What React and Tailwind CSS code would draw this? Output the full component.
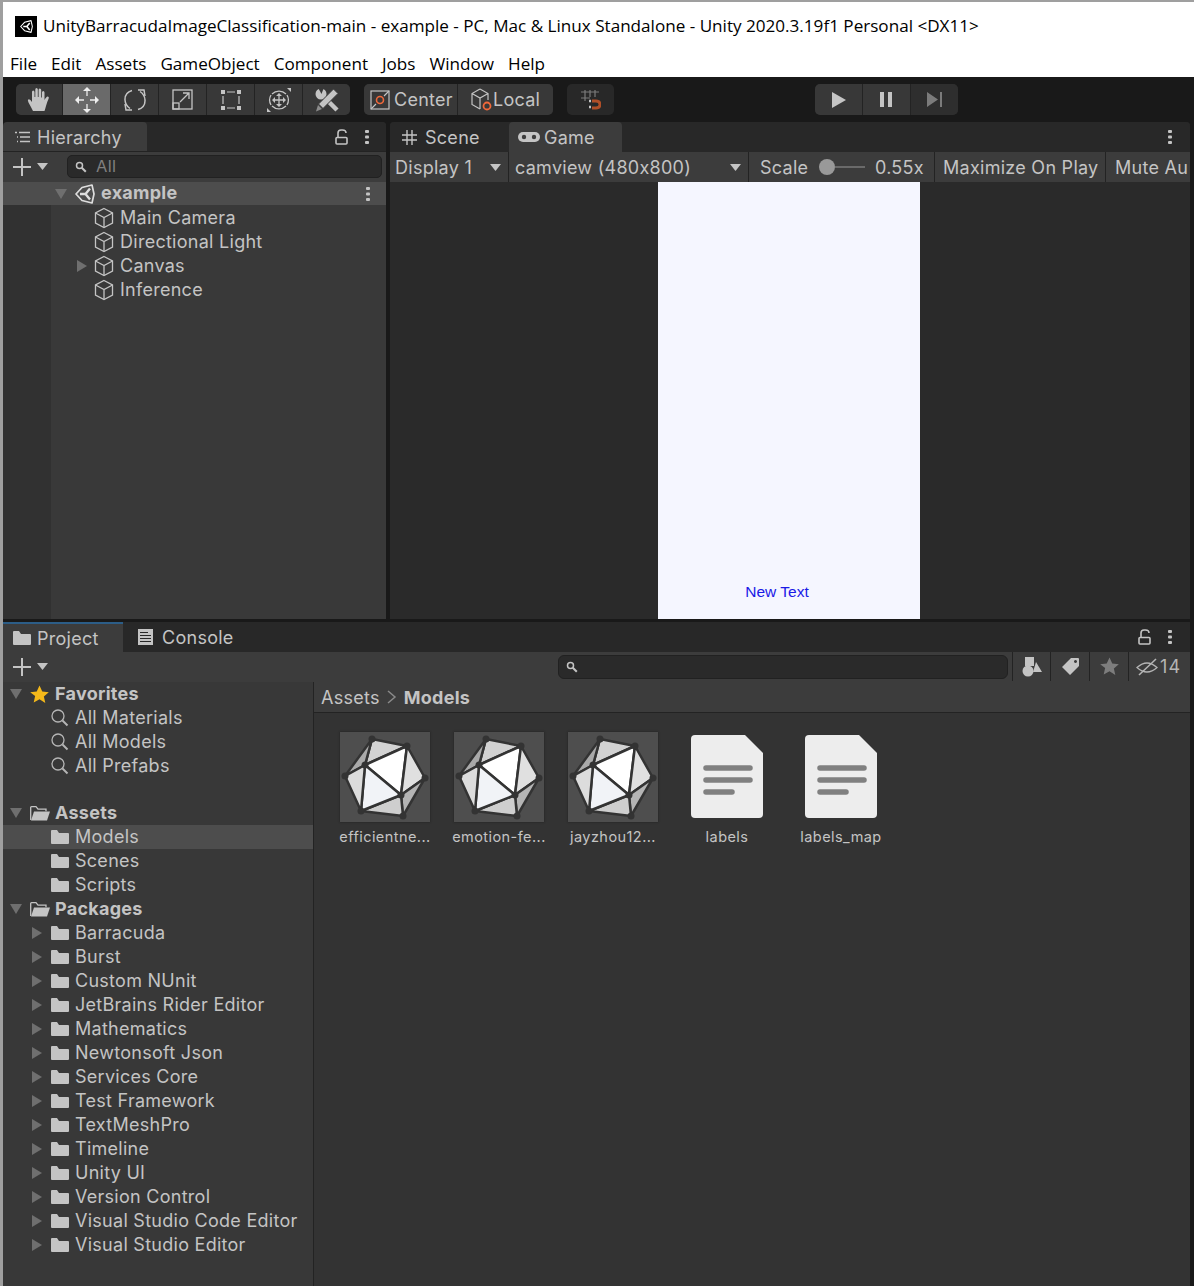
const hierarchyItems = [
  { name: "Main Camera" },
  { name: "Directional Light" },
  { name: "Canvas", expandable: true },
  { name: "Inference" },
];

const packages = [
  "Barracuda",
  "Burst",
  "Custom NUnit",
  "JetBrains Rider Editor",
  "Mathematics",
  "Newtonsoft Json",
  "Services Core",
  "Test Framework",
  "TextMeshPro",
  "Timeline",
  "Unity UI",
  "Version Control",
  "Visual Studio Code Editor",
  "Visual Studio Editor",
];

const ArrowDown = () => (
  <svg width="12" height="12" viewBox="0 0 12 12" className="shrink-0"><path d="M0 1h12L6 11z" fill="#6f6f6f" /></svg>
);

const ArrowRight = () => (
  <svg width="12" height="12" viewBox="0 0 12 12" className="shrink-0"><path d="M1 0v12l10-6z" fill="#6f6f6f" /></svg>
);

const Caret = ({ color = "#c4c4c4" }) => (
  <svg width="11" height="7" viewBox="0 0 11 7" className="shrink-0"><path d="M0 0h11L5.5 7z" fill={color} /></svg>
);

const Plus = () => (
  <svg width="18" height="18" viewBox="0 0 18 18" className="shrink-0"><path d="M9 0v18M0 9h18" stroke="#c4c4c4" strokeWidth="2" /></svg>
);

const Dots = () => (
  <svg width="4" height="16" viewBox="0 0 4 16" className="shrink-0"><g fill="#c4c4c4"><rect y="1" width="4" height="3" rx="1" /><rect y="6.5" width="4" height="3" rx="1" /><rect y="12" width="4" height="3" rx="1" /></g></svg>
);

const Lock = () => (
  <svg width="13" height="16" viewBox="0 0 13 16" className="shrink-0" fill="none" stroke="#c4c4c4" strokeWidth="1.6">
    <rect x="1" y="8.500" width="11" height="6.500" rx="1" />
    <path d="M3 8.500V4Q3 1 6 1h1.500Q11 1 11 4" />
  </svg>
);

const Cube = () => (
  <svg width="20" height="22" viewBox="0 0 20 22" className="shrink-0" fill="none" stroke="#c4c4c4" strokeWidth="1.3">
    <path d="M10 1.500l8.500 4.500v10L10 20.500 1.500 16V6z" />
    <path d="M1.500 6l8.500 4.500L18.500 6M10 10.500v10" />
  </svg>
);

const UnityLogo = ({ size = 20, color = "#dddddd" }) => (
  <svg width={size} height={size} viewBox="0 0 20 20" className="shrink-0" fill="none" stroke={color}>
    <path d="M1 10L7 3.500 17 1l2 9-2 9-10-2.500z" strokeWidth="1.700" strokeLinejoin="round" />
    <path d="M5 10h5.500M10.500 10L15 4.500M10.500 10L15 15.500" strokeWidth="2.400" />
  </svg>
);

const Folder = () => (
  <svg width="18" height="14" viewBox="0 0 18 14" className="shrink-0"><path d="M0 1q0-1 1-1h5l2 3h9q1 0 1 1v9q0 1-1 1H1q-1 0-1-1z" fill="#c4c4c4" /></svg>
);

const FolderOpen = () => (
  <svg width="20" height="15" viewBox="0 0 20 15" className="shrink-0">
    <path d="M.700 14V1.500q0-.800.800-.800h4.500l2 2.500h8v2" fill="none" stroke="#c4c4c4" strokeWidth="1.300" />
    <path d="M1 14.500l3-9h16l-3 9z" fill="#c4c4c4" />
  </svg>
);

const Star = ({ color = "#f5b91a", size = 19 }) => (
  <svg width={size} height={size} viewBox="0 0 20 20" className="shrink-0"><path d="M10 .500l2.900 6.300 6.900.700-5.200 4.600 1.500 6.900L10 15l-6.100 3.500 1.500-6.900L.200 7.500l6.900-.700z" fill={color} /></svg>
);

const SearchIcon = () => (
  <svg width="20" height="20" viewBox="0 0 20 20" className="shrink-0" fill="none">
    <circle cx="8" cy="8" r="6" stroke="#b5b5b5" strokeWidth="1.300" />
    <path d="M12.500 12.500l5 5" stroke="#b5b5b5" strokeWidth="2" />
  </svg>
);

const SmallSearch = () => (
  <svg width="12" height="12" viewBox="0 0 12 12" className="shrink-0" fill="none">
    <circle cx="4.500" cy="4.500" r="3" stroke="#c4c4c4" strokeWidth="1.500" />
    <path d="M6.800 6.800l4 4" stroke="#c4c4c4" strokeWidth="2" />
  </svg>
);

const HandIcon = () => (
  <svg width="24" height="25" viewBox="0 0 24 25" fill="#c4c4c4">
    <path d="M6 24Q4 20 1.500 15.500 .200 13 1.500 12.300 3 11.700 5 15V5q0-1.500 1.200-1.500T7.500 5v5h.8V2.500Q8.300 1 9.500 1t1.300 1.500V10h.8V3q0-1.500 1.200-1.500T14.200 3v7.500h.8V5.500q0-1.500 1.200-1.500t1.300 1.500V13q2-4 3.500-3.500t.5 2.500q-1.500 3-2.500 7-.8 3-1.500 5z" />
  </svg>
);

const MoveIcon = () => (
  <svg width="24" height="28" viewBox="0 0 24 28" fill="none" stroke="#eeeeee" strokeWidth="1.300">
    <path d="M12 3v7M12 18v7M2 14h7M15 14h7" />
    <path d="M12 1l-4 4h8zM12 27l-4-4h8zM0 14l4-4v8zM24 14l-4-4v8z" fill="#eeeeee" stroke="none" />
  </svg>
);

const RotateIcon = () => (
  <svg width="22" height="24" viewBox="0 0 22 24" fill="none" stroke="#c4c4c4" strokeWidth="1.500">
    <path d="M8 2.500C3 4 .800 8 1 12c.200 3.500 2 6.500 5 8.500" />
    <path d="M14 21.500c5-1.500 7.200-5.500 7-9.500-.200-3.500-2-6.500-5-8.500" />
    <path d="M1 16l1 6h6M21 8l-1-6h-6" />
  </svg>
);

const ScaleIcon = () => (
  <svg width="21" height="21" viewBox="0 0 21 21" fill="none" stroke="#c4c4c4" strokeWidth="1.300">
    <rect x="1" y="1" width="19" height="19" />
    <rect x="1" y="14" width="6" height="6" />
    <path d="M8 13l9-9M11 4h6v6" />
  </svg>
);

const RectIcon = () => (
  <svg width="20" height="20" viewBox="0 0 20 20" fill="none" stroke="#c4c4c4" strokeWidth="1.200">
    <path d="M6 2h8M6 18h8M2 6v8M18 6v8" />
    <g fill="#c4c4c4" stroke="none"><rect width="4" height="4" /><rect x="16" width="4" height="4" /><rect y="16" width="4" height="4" /><rect x="16" y="16" width="4" height="4" /></g>
  </svg>
);

const TransformIcon = () => (
  <svg width="24" height="24" viewBox="0 0 24 24" fill="none" stroke="#c4c4c4" strokeWidth="1.300">
    <path d="M5 6a10 10 0 0 1 14 0M19 18a10 10 0 0 1-14 0M4 17a10 10 0 0 1 0-10M20 7a10 10 0 0 1 0 10" />
    <path d="M12 6v12M6 12h12" />
    <g fill="#c4c4c4" stroke="none">
      <path d="M12 5l-3 3h6zM12 19l-3-3h6zM5 12l3-3v6zM19 12l-3-3v6z" />
      <path d="M24 0v4l-4-4zM0 24v-4l4 4z" />
    </g>
  </svg>
);

const ToolsIcon = () => (
  <svg width="24" height="24" viewBox="0 0 24 24">
    <path d="M7 7l15 15" stroke="#c4c4c4" strokeWidth="4.500" />
    <circle cx="6" cy="6" r="5.500" fill="#c4c4c4" />
    <path d="M6.500 6L3 -.500h6z" fill="#383838" />
    <path d="M18.500 1l4.500 4.500L8 20.500 3.500 16z" fill="#c4c4c4" stroke="#383838" strokeWidth="1" />
    <path d="M3 17l4 4-6 2.500z" fill="#8c8c8c" />
  </svg>
);

const PivotIcon = () => (
  <svg width="20" height="20" viewBox="0 0 20 20" fill="none" className="shrink-0">
    <rect x="1" y="1" width="18" height="18" stroke="#c4c4c4" strokeWidth="1.200" />
    <path d="M1 19l5-5M14 6l5-5" stroke="#c4c4c4" strokeWidth="1.200" />
    <circle cx="10" cy="10" r="3.500" stroke="#f0683a" strokeWidth="1.600" />
  </svg>
);

const LocalIcon = () => (
  <svg width="22" height="24" viewBox="0 0 22 24" fill="none" className="shrink-0">
    <path d="M10 1l8 4.500V12M10 21l-8-4.500v-11L10 1M2 5.500l8 4.500 8-4.500M10 10v11" stroke="#c4c4c4" strokeWidth="1.200" />
    <circle cx="17" cy="18" r="3.500" stroke="#f0683a" strokeWidth="1.800" />
  </svg>
);

const SnapIcon = () => (
  <svg width="20" height="22" viewBox="0 0 20 22" fill="none">
    <path d="M4 1v11M9 1v7M14 1v7M0 3h18M0 9h9" stroke="#7b7b7b" strokeWidth="1.200" />
    <path d="M8 12h2M8 18h2" stroke="#c4c4c4" strokeWidth="2.500" />
    <path d="M11 12h4q4 0 4 3.500t-4 3.500h-4" stroke="#b04f28" strokeWidth="2.800" />
  </svg>
);

const GamepadIcon = () => (
  <svg width="22" height="12" viewBox="0 0 22 12" className="shrink-0">
    <rect y="1" width="22" height="10" rx="5" fill="#c4c4c4" />
    <circle cx="6" cy="6" r="2.200" fill="#3c3c3c" />
    <circle cx="16" cy="6" r="2.200" fill="#3c3c3c" />
  </svg>
);

const HashIcon = () => (
  <svg width="15" height="15" viewBox="0 0 15 15" className="shrink-0" stroke="#c4c4c4" strokeWidth="1.400">
    <path d="M5 0v15M10 0v15M0 5h15M0 10h15" />
  </svg>
);

const ListIcon = () => (
  <svg width="15" height="12" viewBox="0 0 15 12" className="shrink-0" stroke="#c4c4c4" strokeWidth="1.500">
    <path d="M4 1.500h11M5 6h10M5 10.500h10M0 1.500h2M2 6h1M2 10.500h1" />
  </svg>
);

const ConsoleIcon = () => (
  <svg width="15" height="16" viewBox="0 0 15 16" className="shrink-0">
    <rect width="15" height="16" fill="#c4c4c4" />
    <path d="M2 3.500h8M2 6.500h11M2 9.500h11M2 12.500h11" stroke="#282828" strokeWidth="1.200" />
  </svg>
);

const Icosahedron = () => (
  <svg width="90" height="90" viewBox="0 0 90 90" className="block bg-[#4e4e4e] shadow-[0_0_2px_#1f1f1f]">
    <g stroke="#333333" strokeWidth="2.500" strokeLinejoin="round">
      <path d="M32 7L67 14 25 33z" fill="#d2d2d2" />
      <path d="M32 7L25 33 5 44z" fill="#a9a9a9" />
      <path d="M25 33L67 14 61 63z" fill="#ffffff" />
      <path d="M67 14L85 46 61 63z" fill="#e0e0e0" />
      <path d="M85 46L61 63 63 84z" fill="#b4b4b4" />
      <path d="M61 63L21 79 63 84z" fill="#cecece" />
      <path d="M25 33L61 63 21 79z" fill="#f1f3f7" />
      <path d="M5 44L25 33 21 79z" fill="#dcdcdc" />
    </g>
    <g fill="#333333">
      <circle cx="32" cy="7" r="3.500" />
      <circle cx="67" cy="14" r="3.500" />
      <circle cx="5" cy="44" r="3.500" />
      <circle cx="25" cy="33" r="3.500" />
      <circle cx="85" cy="46" r="3.500" />
      <circle cx="61" cy="63" r="3.500" />
      <circle cx="21" cy="79" r="3.500" />
      <circle cx="63" cy="84" r="3.500" />
    </g>
  </svg>
);

const DocIcon = () => (
  <svg width="72" height="83" viewBox="0 0 72 83" className="block">
    <path d="M4 0h50l18 18v61q0 4-4 4H4q-4 0-4-4V4q0-4 4-4z" fill="#ededed" />
    <g stroke="#808080" strokeWidth="5.500" strokeLinecap="round">
      <path d="M15 33h44M15 45h44M15 57h26" />
    </g>
  </svg>
);

const ToolButton = ({ active, children }) => (
  <div className={`w-[47px] first:w-[46px] h-full flex items-center justify-center ${active ? "bg-[#6a6a6a]" : "bg-[#383838]"}`}>
    {children}
  </div>
);

const ModelAsset = ({ label }) => (
  <div className="w-[114px] flex flex-col items-center">
    <div className="w-[90px] h-[90px]"><Icosahedron /></div>
    <div className="mt-[6px] text-[14.500px] leading-[18px] tracking-[0.03em] whitespace-nowrap">{label}</div>
  </div>
);

const DocAsset = ({ label }) => (
  <div className="w-[114px] flex flex-col items-center">
    <div className="h-[90px] pt-[3px]"><DocIcon /></div>
    <div className="mt-[6px] text-[14.500px] leading-[18px] tracking-[0.03em] whitespace-nowrap">{label}</div>
  </div>
);

const FavoriteRow = ({ label }) => (
  <div className="h-6 flex items-center pl-[47px]">
    <div className="w-[25px]"><SearchIcon /></div>
    <span className="pb-[2px]">{label}</span>
  </div>
);

const FolderRow = ({ label, arrow, selected }) => (
  <div className={`h-6 flex items-center ${selected ? "bg-[#4d4d4d]" : ""}`}>
    <div className="w-[48px] pl-[28px] flex">{arrow && <ArrowRight />}</div>
    <div className="w-[24px]"><Folder /></div>
    <span className="pb-[2px]">{label}</span>
  </div>
);

export default function App() {
  return (
    <div
      className="w-[1194px] h-[1286px] bg-[#191919] border-l-[3px] border-t-2 border-[#9f9f9f] flex flex-col overflow-hidden text-[#c4c4c4] text-[18px] tracking-[0.015em]"
      style={{ fontFamily: "Inter, sans-serif" }}
    >
      {/* window title + menu */}
      <div className="bg-white text-black tracking-normal shrink-0" style={{ fontFamily: "'Open Sans', sans-serif" }}>
        <div className="h-[48px] flex items-center pl-[12px]">
          <div className="w-[22px] h-[21px] bg-black flex items-center justify-center">
            <UnityLogo size={13} color="#ffffff" />
          </div>
          <span className="ml-[6px] text-[17.100px] whitespace-nowrap">UnityBarracudaImageClassification-main - example - PC, Mac &amp; Linux Standalone - Unity 2020.3.19f1 Personal &lt;DX11&gt;</span>
        </div>
        <div className="h-[27px] flex items-center gap-[14px] pl-[7px] text-[17.100px]">
          <span>File</span>
          <span>Edit</span>
          <span>Assets</span>
          <span>GameObject</span>
          <span>Component</span>
          <span>Jobs</span>
          <span>Window</span>
          <span>Help</span>
        </div>
      </div>

      {/* main toolbar */}
      <div className="h-[45px] shrink-0 flex items-center pl-[13px]">
        <div className="h-[31px] flex gap-px rounded-[5px] overflow-hidden bg-[#232323]">
          <ToolButton><HandIcon /></ToolButton>
          <ToolButton active><MoveIcon /></ToolButton>
          <ToolButton><RotateIcon /></ToolButton>
          <ToolButton><ScaleIcon /></ToolButton>
          <ToolButton><RectIcon /></ToolButton>
          <ToolButton><TransformIcon /></ToolButton>
          <ToolButton><ToolsIcon /></ToolButton>
        </div>
        <div className="ml-[14px] h-[31px] flex gap-px rounded-[5px] overflow-hidden bg-[#232323]">
          <div className="w-[93px] bg-[#383838] flex items-center pl-[6px] gap-[4px]"><PivotIcon /><span>Center</span></div>
          <div className="w-[95px] bg-[#383838] flex items-center pl-[12px] gap-[1px]"><LocalIcon /><span>Local</span></div>
        </div>
        <div className="ml-[14px] w-[47px] h-[31px] rounded-[5px] bg-[#282828] flex items-center justify-center"><SnapIcon /></div>
        <div className="ml-[201px] h-[31px] flex gap-px rounded-[5px] overflow-hidden bg-[#232323]">
          <div className="w-[47px] bg-[#383838] flex items-center justify-center">
            <svg width="14" height="16" viewBox="0 0 14 16"><path d="M0 0l14 8-14 8z" fill="#c4c4c4" /></svg>
          </div>
          <div className="w-[47px] bg-[#383838] flex items-center justify-center">
            <svg width="13" height="15" viewBox="0 0 13 15"><path d="M0 0h4v15H0zM8 0h4v15H8z" fill="#c4c4c4" /></svg>
          </div>
          <div className="w-[47px] bg-[#2e2e2e] flex items-center justify-center">
            <svg width="16" height="15" viewBox="0 0 16 15"><path d="M0 0l11 7.500L0 15zM13 0h2v15h-2z" fill="#7b7b7b" /></svg>
          </div>
        </div>
      </div>

      {/* hierarchy + game */}
      <div className="h-[497px] shrink-0 flex gap-[4px] pr-[4px]">
        <div className="w-[383px] flex flex-col rounded-t-[4px] overflow-hidden bg-[#313131]">
          <div className="h-[29px] shrink-0 bg-[#282828] flex">
            <div className="w-[144px] bg-[#3c3c3c] rounded-t-[4px] flex items-center pl-[12px] pt-px gap-[7px]">
              <ListIcon />
              <span>Hierarchy</span>
            </div>
            <div className="flex-1 flex items-center justify-end pr-[17px] gap-[17px]"><Lock /><Dots /></div>
          </div>
          <div className="h-[31px] shrink-0 bg-[#3c3c3c] border-t border-[#232323] flex items-center pl-[10px] pb-px">
            <Plus />
            <div className="ml-[6px]"><Caret /></div>
            <div className="ml-[19px] w-[315px] h-[23px] bg-[#2a2a2a] border border-[#212121] rounded-[5px] flex items-center pl-[7px] gap-[9px] text-[#7f7f7f] text-[16.500px]">
              <SmallSearch />
              <span>All</span>
            </div>
          </div>
          <div className="flex-1 flex flex-col">
            <div className="h-[23px] shrink-0 bg-[#4d4d4d] flex items-center pl-[52px]">
              <ArrowDown />
              <div className="ml-[8px]"><UnityLogo /></div>
              <span className="ml-[6px] pb-[2px] font-bold">example</span>
              <div className="ml-auto mr-[16px]"><Dots /></div>
            </div>
            <div className="flex-1 ml-[48px] bg-[#393939] pt-px">
              {hierarchyItems.map((item) => (
                <div key={item.name} className="h-6 flex items-center pl-[25px]">
                  <div className="w-[18px] flex">{item.expandable && <ArrowRight />}</div>
                  <Cube />
                  <span className="ml-[6px] pb-[2px]">{item.name}</span>
                </div>
              ))}
            </div>
          </div>
        </div>

        <div className="flex-1 flex flex-col rounded-t-[4px] overflow-hidden bg-[#2a2a2a]">
          <div className="h-[30px] shrink-0 bg-[#282828] flex">
            <div className="w-[119px] flex items-center pl-[12px] gap-[8px]"><HashIcon /><span>Scene</span></div>
            <div className="w-[113px] bg-[#3c3c3c] rounded-t-[4px] flex items-center pl-[9px] gap-[4px]"><GamepadIcon /><span>Game</span></div>
            <div className="flex-1 flex items-center justify-end pr-[18px]"><Dots /></div>
          </div>
          <div className="h-[30px] shrink-0 bg-[#3c3c3c] flex whitespace-nowrap overflow-hidden">
            <div className="w-[119px] border-r border-[#232323] flex items-center pl-[5px]">
              <span>Display 1</span>
              <div className="ml-auto mr-[7px]"><Caret /></div>
            </div>
            <div className="w-[240px] border-r border-[#232323] flex items-center pl-[6px]">
              <span>camview (480x800)</span>
              <div className="ml-auto mr-[7px]"><Caret /></div>
            </div>
            <div className="w-[186px] border-r border-[#232323] flex items-center pl-[11px]">
              <span className="w-[59px]">Scale</span>
              <div className="w-[16px] h-[16px] rounded-full bg-[#999999] shrink-0" />
              <div className="w-[30px] h-[2px] bg-[#6a6a6a] shrink-0" />
              <span className="ml-[10px]">0.55x</span>
            </div>
            <div className="w-[171px] border-r border-[#232323] flex items-center pl-[8px]">Maximize On Play</div>
            <div className="flex-1 flex items-center pl-[9px] overflow-hidden">Mute Au</div>
          </div>
          <div className="flex-1 flex justify-center pr-[2px]">
            <div className="w-[262px] bg-[#f5f6ff] flex items-end justify-center pb-[18px] pr-[24px]">
              <span className="text-[15.500px] leading-[18px] tracking-normal text-[#1a1ae6]" style={{ fontFamily: "'Liberation Sans', sans-serif" }}>New Text</span>
            </div>
          </div>
        </div>
      </div>

      {/* project */}
      <div className="mt-[3px] flex-1 mr-[4px] flex flex-col bg-[#333333] min-h-0">
        <div className="h-[30px] shrink-0 bg-[#282828] flex">
          <div className="w-[120px] bg-[#3c3c3c] border-t-2 border-[#2c5d87] flex items-center pl-[10px] gap-[6px]"><Folder /><span>Project</span></div>
          <div className="ml-[15px] flex items-center gap-[9px]"><ConsoleIcon /><span>Console</span></div>
          <div className="flex-1 flex items-center justify-end pr-[18px] gap-[17px]"><Lock /><Dots /></div>
        </div>
        <div className="h-[30px] shrink-0 bg-[#3c3c3c] flex items-center pl-[10px] pb-px">
          <Plus />
          <div className="ml-[6px]"><Caret /></div>
          <div className="ml-[510px] w-[450px] h-[24px] bg-[#2a2a2a] border border-[#212121] rounded-[6px] flex items-center pl-[7px]"><SmallSearch /></div>
          <div className="ml-[4px] w-[38px] h-full border-l border-[#232323] flex items-center justify-center">
            <svg width="20" height="20" viewBox="0 0 20 20"><g fill="#c4c4c4"><rect x="3" y="0" width="9" height="9" /><circle cx="6" cy="14" r="5.500" /><path d="M14 5l6 10h-9z" /></g></svg>
          </div>
          <div className="w-[39px] h-full border-l border-[#232323] flex items-center justify-center">
            <svg width="17" height="17" viewBox="0 0 17 17"><path d="M9 0h7q1 0 1 1v7l-9 9-8-8zM13.500 2a1.500 1.500 0 1 0 .01 0z" fill="#c4c4c4" fillRule="evenodd" /></svg>
          </div>
          <div className="w-[39px] h-full border-l border-[#232323] flex items-center justify-center"><Star color="#7d7d7d" /></div>
          <div className="flex-1 h-full border-l border-[#232323] flex items-center pl-[7px] gap-[2px] text-[#b5b5b5]">
            <svg width="22" height="18" viewBox="0 0 22 18" fill="none" stroke="#b5b5b5" strokeWidth="1.300">
              <path d="M1 9.500Q11 .500 21 9.500 11 18.500 1 9.500z" />
              <path d="M3 17L20 1" strokeWidth="1.600" />
            </svg>
            <span className="tracking-[0.06em]">14</span>
          </div>
        </div>

        <div className="flex-1 flex min-h-0">
          <div className="w-[310px] shrink-0 bg-[#383838] border-r border-[#232323] box-content">
            <div className="h-6 flex items-center pl-[7px]">
              <ArrowDown />
              <div className="ml-[8px] w-[25px]"><Star /></div>
              <span className="pb-[2px] font-bold">Favorites</span>
            </div>
            <FavoriteRow label="All Materials" />
            <FavoriteRow label="All Models" />
            <FavoriteRow label="All Prefabs" />
            <div className="h-6 mt-[23px] flex items-center pl-[7px]">
              <ArrowDown />
              <div className="ml-[8px] w-[25px]"><FolderOpen /></div>
              <span className="pb-[2px] font-bold">Assets</span>
            </div>
            <FolderRow label="Models" selected />
            <FolderRow label="Scenes" />
            <FolderRow label="Scripts" />
            <div className="h-6 flex items-center pl-[7px]">
              <ArrowDown />
              <div className="ml-[8px] w-[25px]"><FolderOpen /></div>
              <span className="pb-[2px] font-bold">Packages</span>
            </div>
            {packages.map((name) => (
              <FolderRow key={name} label={name} arrow />
            ))}
          </div>

          <div className="flex-1 flex flex-col min-w-0">
            <div className="h-[31px] shrink-0 bg-[#3c3c3c] border-b border-[#232323] flex items-center pl-[7px]">
              <span>Assets</span>
              <svg width="10" height="14" viewBox="0 0 10 14" fill="none" className="mx-[7px]"><path d="M1 1l7 6-7 6" stroke="#8a8a8a" strokeWidth="1.500" /></svg>
              <span className="font-bold">Models</span>
            </div>
            <div className="flex pt-[19px] pl-[14px]">
              <ModelAsset label="efficientne..." />
              <ModelAsset label="emotion-fe..." />
              <ModelAsset label="jayzhou12..." />
              <DocAsset label="labels" />
              <DocAsset label="labels_map" />
            </div>
          </div>
        </div>
      </div>
    </div>
  );
}
